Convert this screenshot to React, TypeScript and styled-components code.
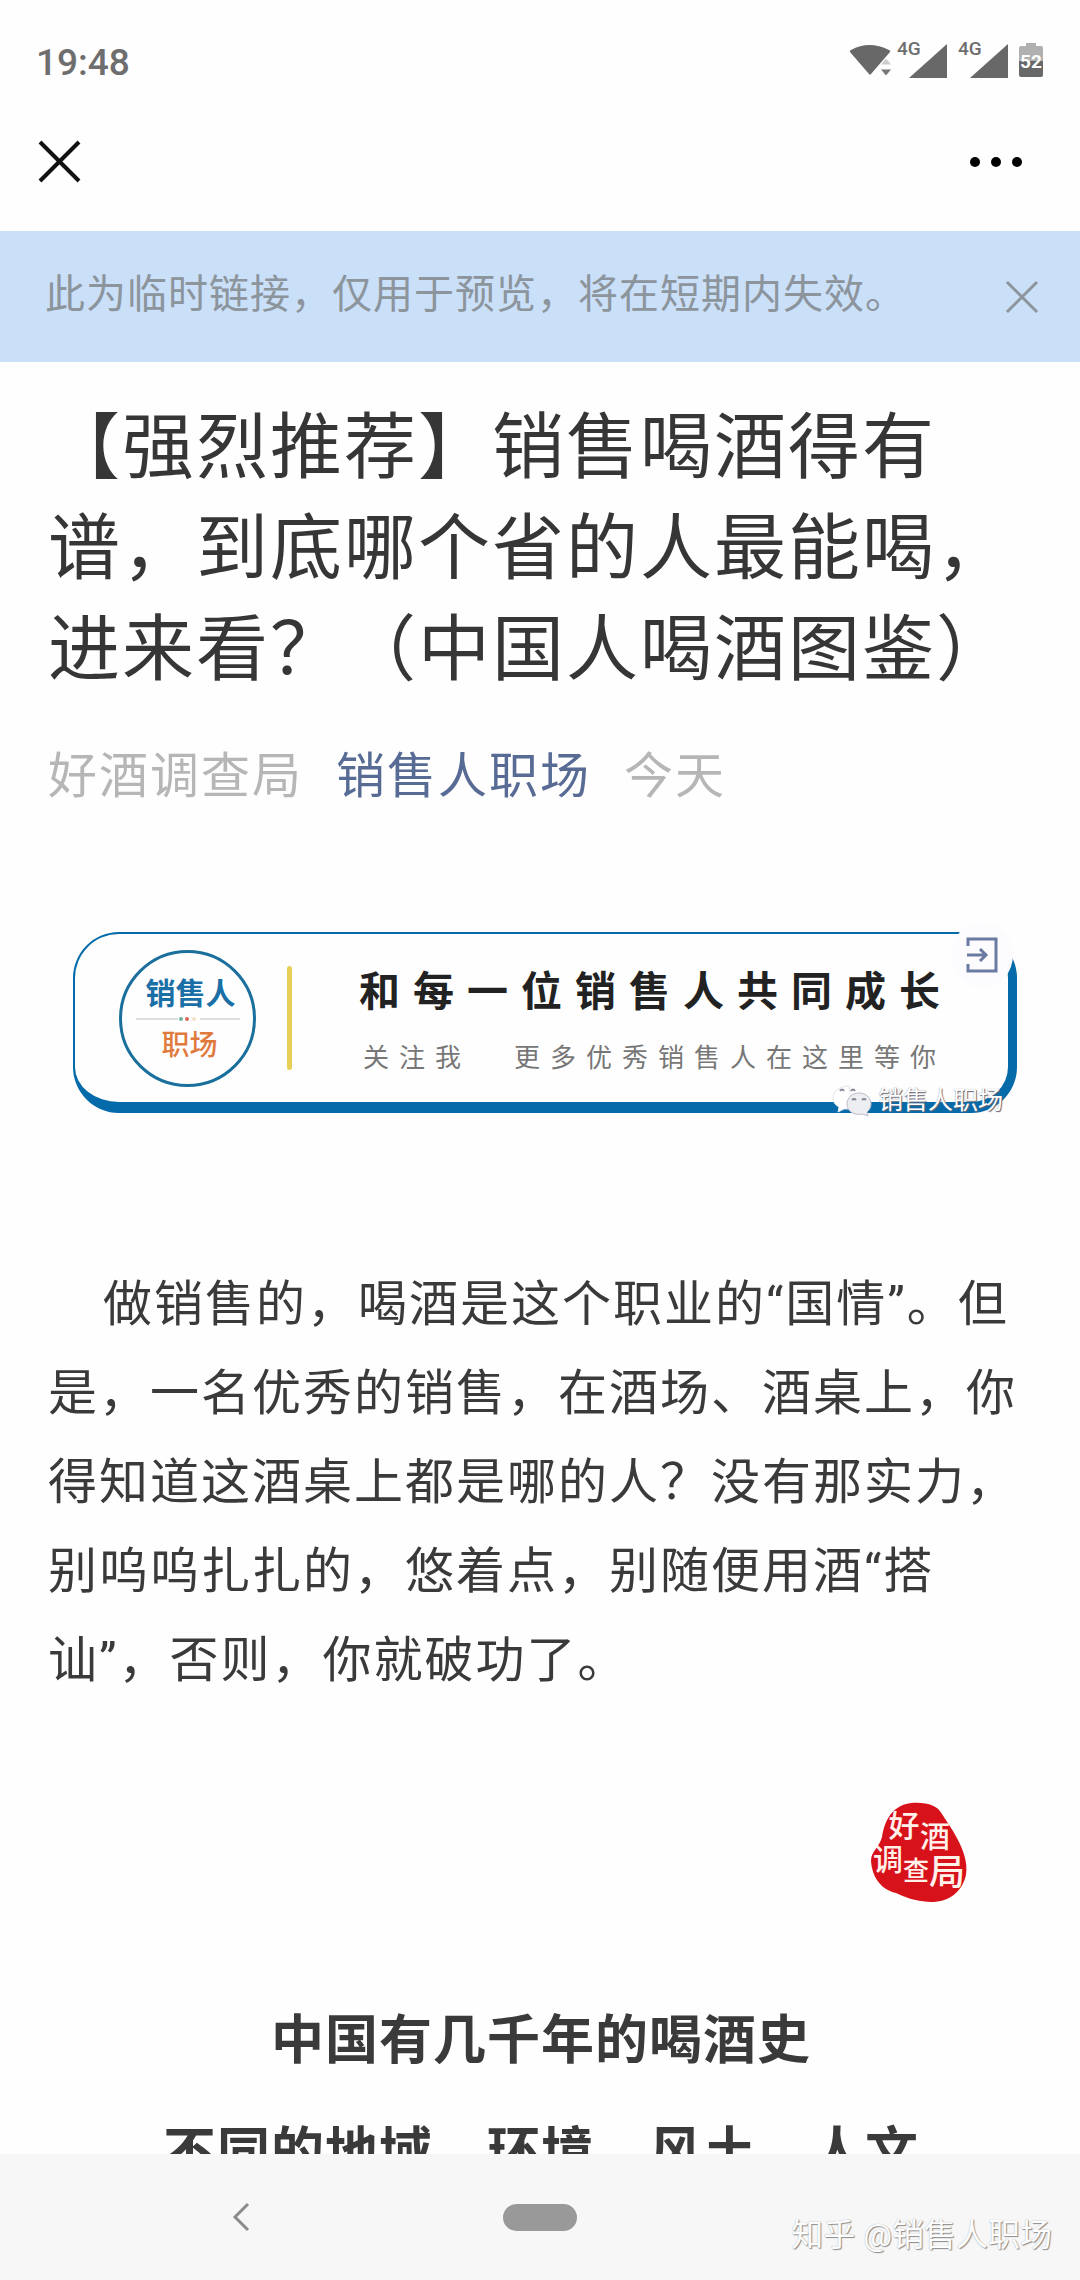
import React from "react";
import styled, { createGlobalStyle } from "styled-components";

const GlobalStyle = createGlobalStyle`
  *, *::before, *::after { box-sizing: border-box; }
  body {
    margin: 0;
    background: #fefefe;
    color: #3a3a3a;
    font-family: Roboto, "Noto Sans CJK SC", sans-serif;
    text-spacing-trim: space-all;
  }
  h1, h2, p { margin: 0; font-weight: 400; }
  button { border: 0; padding: 0; background: none; font: inherit; color: inherit; cursor: pointer; }
  svg { display: block; overflow: visible; }
`;

const Page = styled.div`
  display: flex;
  flex-direction: column;
  height: 100vh;
  overflow: hidden;
`;

const StatusBar = styled.div`
  display: flex;
  align-items: center;
  justify-content: space-between;
  flex: none;
  height: 92px;
  padding: 30px 37px 0 36px;
  color: #6e6e6e;
`;

const Clock = styled.time`
  padding-top: 3px;
  font-size: 37px;
  line-height: 62px;
  font-weight: 500;
`;

const StatusIcons = styled.div`
  display: flex;
  align-items: center;
`;

const TitleBar = styled.header`
  display: flex;
  align-items: center;
  justify-content: space-between;
  flex: none;
  height: 139px;
  padding: 0 56px 0 37px;
  color: #111;
`;

const IconButton = styled.button`
  display: grid;
  place-items: center;
  flex: none;
`;

const Notice = styled.div`
  display: flex;
  align-items: center;
  justify-content: space-between;
  flex: none;
  height: 131px;
  padding: 0 40px 0 45px;
  background: #cadff8;
  color: #8c949c;
  font-size: 40px;
  line-height: 60px;
  letter-spacing: 1px;
`;

const NoticeText = styled.span`
  padding-bottom: 3px;
`;

const Article = styled.main`
  flex: 1;
  min-height: 0;
  overflow: hidden;
  padding: 35px 46px 0 48px;
`;

const Title = styled.h1`
  font-size: 72px;
  line-height: 101px;
  letter-spacing: 2px;
  color: #363636;
`;

const Meta = styled.div`
  display: flex;
  gap: 33px;
  margin-top: 41px;
  font-size: 49px;
  line-height: 72px;
  letter-spacing: 2px;
  color: #b6b6b6;
`;

const AuthorLink = styled.a`
  color: #576b95;
  text-decoration: none;
`;

const Banner = styled.section`
  position: relative;
  display: flex;
  align-items: center;
  height: 181px;
  margin: 119px 17px 0 25px;
  padding-left: 44px;
  border: solid #046aa9;
  border-width: 2px 9px 11px 2px;
  border-radius: 46px;
`;

const Badge = styled.div`
  display: flex;
  flex-direction: column;
  align-items: center;
  justify-content: center;
  flex: none;
  width: 137px;
  height: 137px;
  border: 3px solid #1a6f9c;
  border-radius: 50%;
`;

const BadgeTop = styled.span`
  padding: 6px 0 0 6px;
  font-size: 30px;
  line-height: 36px;
  font-weight: 700;
  color: #1a6fa6;
`;

const BadgeBottom = styled.span`
  padding-left: 4px;
  font-size: 28px;
  line-height: 40px;
  font-weight: 500;
  color: #e07a3c;
`;

const Divider = styled.span`
  flex: none;
  width: 5px;
  height: 104px;
  margin-left: 31px;
  border-radius: 3px;
  background: #e8cf58;
`;

const BannerText = styled.div`
  margin-left: 67px;
  padding-top: 16px;
  white-space: nowrap;
`;

const Slogan = styled.p`
  font-size: 41px;
  line-height: 64px;
  font-weight: 700;
  letter-spacing: 13px;
  color: #222;
`;

const Invite = styled.p`
  display: flex;
  gap: 43px;
  padding-left: 4px;
  font-size: 26px;
  line-height: 68px;
  letter-spacing: 10px;
  color: #777;
`;

const OpenButton = styled(IconButton)`
  position: absolute;
  top: -12px;
  right: -5px;
  width: 62px;
  height: 66px;
  border-radius: 50%;
  background: #fcfcfe;
`;

const BannerMark = styled.div`
  position: absolute;
  right: 5px;
  bottom: -15px;
  display: flex;
  align-items: center;
  gap: 6px;
  font-size: 25px;
  line-height: 32px;
  color: #fff;
  text-shadow: 1px 1px 1px #667, 0 0 1px #889;
`;

const Body = styled.p`
  margin-top: 147px;
  font-size: 49px;
  line-height: 89px;
  letter-spacing: 2px;
  text-indent: 55px;
`;

const SealRow = styled.div`
  display: flex;
  justify-content: flex-end;
  margin-top: 98px;
  padding-right: 67px;
`;

const Verse = styled.h2`
  margin-top: 83px;
  font-size: 53px;
  line-height: 112px;
  letter-spacing: 1px;
  font-weight: 700;
  text-align: center;
`;

const NavBar = styled.nav`
  position: relative;
  display: grid;
  grid-template-columns: 1fr auto 1fr;
  align-items: center;
  flex: none;
  height: 126px;
  background: #f7f7f7;
`;

const BackButton = styled(IconButton)`
  justify-self: center;
  margin-right: 22px;
`;

const HomeButton = styled.button`
  width: 74px;
  height: 27px;
  border-radius: 14px;
  background: #999;
`;

const SiteMark = styled.span`
  position: absolute;
  right: 28px;
  bottom: 21px;
  font-size: 32px;
  line-height: 48px;
  color: #fdfdfd;
  text-shadow: 1px 1px 1px #8c8c8c, 0 0 1px #aaa;
`;

function WifiIcon() {
  return (
    <svg width="46" height="36" viewBox="0 0 46 36" aria-hidden="true">
      <path d="M1 9Q0 8 2 7Q20-3 40 7Q42 8 41 9L22 31Q21 32 20 31Z" fill="#686868" />
      <path d="M37 15l6 7H31z" fill="#ccc" stroke="#fefefe" />
      <path d="M31 26h12l-6 7z" fill="#777" stroke="#fefefe" />
    </svg>
  );
}

function SignalIcon() {
  return (
    <svg width="61" height="36" viewBox="0 0 61 36" aria-hidden="true">
      <text x="2" y="12" fontSize="19" fontWeight="500" fill="#6e6e6e">4G</text>
      <path d="M14 35L52 1V35Z" fill="#686868" />
    </svg>
  );
}

function BatteryIcon() {
  return (
    <svg width="26" height="36" viewBox="-2 0 26 36" aria-hidden="true">
      <path d="M7 0h10v3h5q2 0 2 2v13H0V5q0-2 2-2h5z" fill="#b0b0b0" />
      <path d="M0 18h24v14q0 2-2 2H2q-2 0-2-2z" fill="#686868" />
      <text x="12" y="25" fontSize="19" fontWeight="700" fill="#fff" textAnchor="middle">52</text>
    </svg>
  );
}

function CloseIcon({ size, stroke }: { size: number; stroke: number }) {
  return (
    <svg width={size} height={size} viewBox={`0 0 ${size} ${size}`} aria-hidden="true">
      <path
        d={`M3 3L${size - 3} ${size - 3}M${size - 3} 3L3 ${size - 3}`}
        stroke="currentColor"
        strokeWidth={stroke}
      />
    </svg>
  );
}

function BadgeRule() {
  return (
    <svg width="104" height="14" viewBox="0 0 104 14" aria-hidden="true">
      <path d="M0 7H42M64 7H104" stroke="#b9c0c6" />
      <circle cx="45" cy="7" r="2" fill="#6fb59a" />
      <circle cx="51" cy="7" r="2" fill="#d9665a" />
      <circle cx="58" cy="7" r="2" fill="#f3e3c4" />
    </svg>
  );
}

function ChatIcon() {
  return (
    <svg width="40" height="32" viewBox="0 0 40 32" aria-hidden="true">
      <path d="M17 1C8 1 1 6 1 13c0 4 2 7 6 9l-1 5 6-3h8z" fill="#fff" stroke="#e2e5ea" />
      <path d="M8 6q2-3 4 0M19 6q2-3 4 0" stroke="#889" fill="none" strokeWidth="2" />
      <path d="M27 8c7 0 12 5 12 11 0 4-2 6-4 8l1 4-5-2c-9 2-16-3-16-10 0-6 5-11 12-11z" fill="#eceef2" stroke="#bbc" />
      <path d="M20 15q2-2 4 0M30 15q2-2 4 0" stroke="#889" fill="none" strokeWidth="2" />
    </svg>
  );
}

function Seal() {
  return (
    <svg width="96" height="99" viewBox="0 0 96 99" role="img" aria-label="好酒调查局">
      <path
        d="M40 0C56-1 66 2 71 11L82 28C92 45 97 58 95 72C91 89 78 99 60 99C42 98 34 94 25 90C8 86 1 72 0 58C0 48 8 45 11 34C13 22 18 3 40 0Z"
        fill="#d8121a"
      />
      <g fill="#fff1ea" fontWeight="500" textAnchor="middle">
        <text x="33" y="34" fontSize="31">好</text>
        <text x="64" y="44" fontSize="30">酒</text>
        <text x="17" y="67" fontSize="30">调</text>
        <text x="45" y="77" fontSize="26">查</text>
        <text x="76" y="82" fontSize="36">局</text>
      </g>
    </svg>
  );
}

export default function App() {
  return (
    <Page>
      <GlobalStyle />
      <StatusBar>
        <Clock>19:48</Clock>
        <StatusIcons>
          <WifiIcon />
          <SignalIcon />
          <SignalIcon />
          <BatteryIcon />
        </StatusIcons>
      </StatusBar>
      <TitleBar>
        <IconButton aria-label="关闭">
          <CloseIcon size={45} stroke={4} />
        </IconButton>
        <IconButton aria-label="更多">
          <svg width="56" height="20" viewBox="0 0 56 20" aria-hidden="true">
            <circle cx="7" cy="10" r="5" />
            <circle cx="28" cy="10" r="5" />
            <circle cx="49" cy="10" r="5" />
          </svg>
        </IconButton>
      </TitleBar>
      <Notice>
        <NoticeText>此为临时链接，仅用于预览，将在短期内失效。</NoticeText>
        <IconButton aria-label="关闭提示">
          <CloseIcon size={36} stroke={3} />
        </IconButton>
      </Notice>
      <Article>
        <Title>【强烈推荐】销售喝酒得有谱，到底哪个省的人最能喝，进来看？（中国人喝酒图鉴）</Title>
        <Meta>
          <span>好酒调查局</span>
          <AuthorLink href="#">销售人职场</AuthorLink>
          <span>今天</span>
        </Meta>
        <Banner>
          <Badge>
            <BadgeTop>销售人</BadgeTop>
            <BadgeRule />
            <BadgeBottom>职场</BadgeBottom>
          </Badge>
          <Divider />
          <BannerText>
            <Slogan>和每一位销售人共同成长</Slogan>
            <Invite>
              <span>关注我</span>
              <span>更多优秀销售人在这里等你</span>
            </Invite>
          </BannerText>
          <OpenButton aria-label="打开">
            <svg width="32" height="36" viewBox="0 0 32 36" fill="none" stroke="#6a7aa2" strokeWidth="3" aria-hidden="true">
              <path d="M2 9V2H30V34H2V27M1 18H20M14 12L20 18L14 24" />
            </svg>
          </OpenButton>
          <BannerMark>
            <ChatIcon />
            <span>销售人职场</span>
          </BannerMark>
        </Banner>
        <Body>
          做销售的，喝酒是这个职业的“国情”。但是，一名优秀的销售，在酒场、酒桌上，你得知道这酒桌上都是哪的人？没有那实力，别呜呜扎扎的，悠着点，别随便用酒“搭讪”，否则，你就破功了。
        </Body>
        <SealRow>
          <Seal />
        </SealRow>
        <Verse>
          中国有几千年的喝酒史
          <br />
          不同的地域、环境、风土、人文
        </Verse>
      </Article>
      <NavBar>
        <BackButton aria-label="返回">
          <svg width="20" height="30" viewBox="0 0 20 30" fill="none" stroke="#8c8c8c" strokeWidth="3" aria-hidden="true">
            <path d="M17 2L4 15L17 28" />
          </svg>
        </BackButton>
        <HomeButton aria-label="主页" />
        <SiteMark>知乎 @销售人职场</SiteMark>
      </NavBar>
    </Page>
  );
}
